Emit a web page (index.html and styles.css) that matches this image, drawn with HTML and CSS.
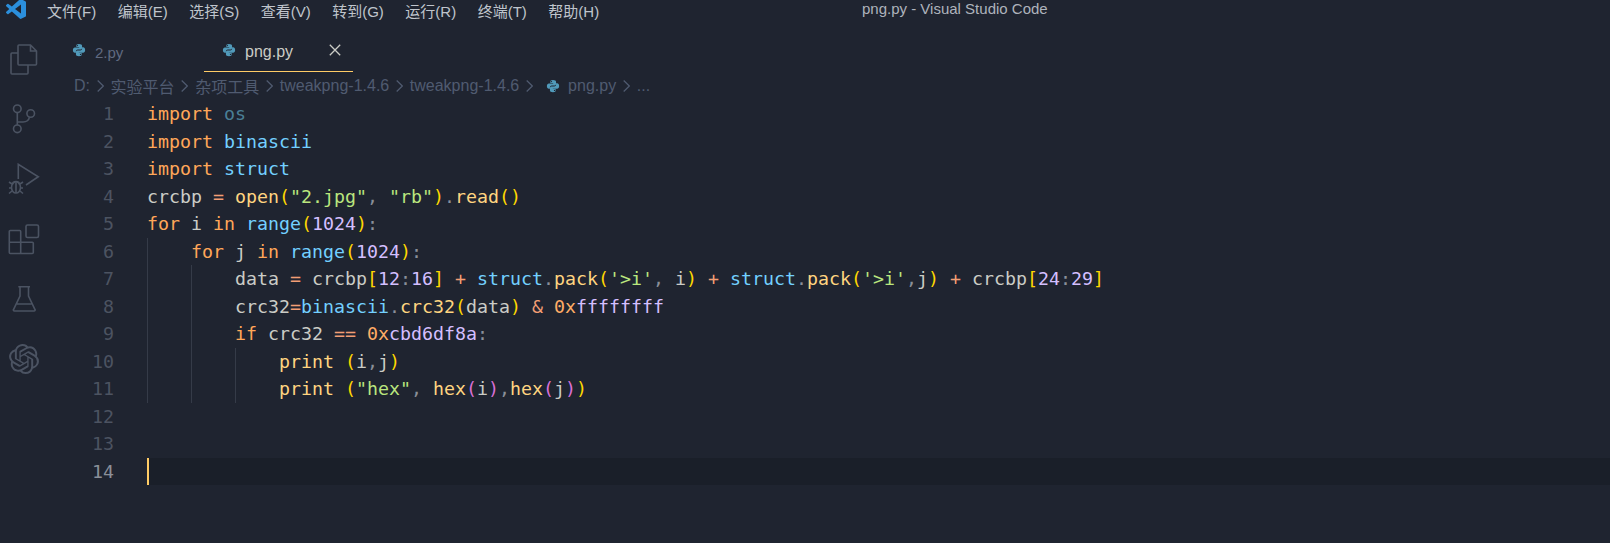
FILE: index.html
```html
<!DOCTYPE html>
<html lang="en">
<head>
    <meta charset="UTF-8">
    <meta name="viewport" content="width=device-width, initial-scale=1.0">
    <title>png.py - Visual Studio Code</title>
    <link rel="stylesheet" href="styles.css">
</head>
<body>
    <div class="titlebar">
        <svg class="logo" viewBox="0 0 24 24" width="20" height="20">
            <path d="M23.15 2.587L18.21.21a1.494 1.494 0 0 0-1.705.29l-9.46 8.63-4.12-3.128a.999.999 0 0 0-1.276.057L.327 7.261A1 1 0 0 0 .326 8.74L3.899 12 .326 15.26a1 1 0 0 0 .001 1.479L1.65 17.94a.999.999 0 0 0 1.276.057l4.12-3.128 9.46 8.63a1.492 1.492 0 0 0 1.704.29l4.942-2.377A1.5 1.5 0 0 0 24 20.06V3.939a1.5 1.5 0 0 0-.85-1.352zm-5.146 14.861L10.826 12l7.178-5.448v10.896z" fill="#2b8fdc"/>
        </svg>
        <div class="menu">
            <span>文件(F)</span>
            <span>编辑(E)</span>
            <span>选择(S)</span>
            <span>查看(V)</span>
            <span>转到(G)</span>
            <span>运行(R)</span>
            <span>终端(T)</span>
            <span>帮助(H)</span>
        </div>
        <div class="wintitle">png.py - Visual Studio Code</div>
    </div>

    <div class="main">
        <div class="activitybar">
            <svg viewBox="0 0 32 32" width="32" height="32"><path d="M11 2h11.500l6 6V21a1 1 0 0 1-1 1H11a1 1 0 0 1-1-1V3a1 1 0 0 1 1-1zM22.500 2V8h6M10 10H4a1 1 0 0 0-1 1V30a1 1 0 0 0 1 1H19a1 1 0 0 0 1-1V22"/></svg>
            <svg viewBox="0 0 32 32" width="32" height="32"><circle cx="9.300" cy="5.800" r="3.800"/><circle cx="9.300" cy="25.800" r="3.800"/><circle cx="22.700" cy="10.500" r="3.800"/><path d="M9.300 9.600V22M9.300 19H15c4 0 6-2.500 6.500-4.800"/></svg>
            <svg viewBox="0 0 32 32" width="32" height="32"><path d="M10.300 16V1.300L30.300 13.700 18 22"/><ellipse cx="8" cy="24.500" rx="4.500" ry="5.500"/><path d="M8 20v10M4.500 21.500c0-4 7-4 7 0M1 19l3 2M15 19l-3 2M1 25h2.500M15 25h-2.500M1 30.500l3-2.500M15 30.500l-3-2.500"/></svg>
            <svg viewBox="0 0 32 32" width="32" height="32"><rect x="18" y="2" width="12.500" height="12.500" rx="1.500"/><path d="M2.300 7.500H11.700a1 1 0 0 1 1 1V30.500H2.300a1 1 0 0 1-1-1V8.500a1 1 0 0 1 1-1zM1.300 19.200H24.300a1 1 0 0 1 1 1V29.500a1 1 0 0 1-1 1H12.700"/></svg>
            <svg viewBox="0 0 32 32" width="32" height="32"><path d="M10.300 3.700H22M12 3.700V13L5.500 26.500A1 1 0 0 0 6.500 28H26a1 1 0 0 0 1-1.500L20.500 13V3.700M9 21H23.500"/></svg>
            <svg class="filled" viewBox="0 0 24 24" width="30" height="30"><path d="M22.2819 9.8211a5.9847 5.9847 0 0 0-.5157-4.9108 6.0462 6.0462 0 0 0-6.5098-2.9A6.0651 6.0651 0 0 0 4.9807 4.1818a5.9847 5.9847 0 0 0-3.9977 2.9 6.0462 6.0462 0 0 0 .7427 7.0966 5.98 5.98 0 0 0 .511 4.9107 6.051 6.051 0 0 0 6.5146 2.9001A5.9847 5.9847 0 0 0 13.2599 24a6.0557 6.0557 0 0 0 5.7718-4.2058 5.9894 5.9894 0 0 0 3.9977-2.9001 6.0557 6.0557 0 0 0-.7475-7.0729zm-9.022 12.6081a4.4755 4.4755 0 0 1-2.8764-1.0408l.1419-.0804 4.7783-2.7582a.7948.7948 0 0 0 .3927-.6813v-6.7369l2.02 1.1686a.071.071 0 0 1 .038.052v5.5826a4.504 4.504 0 0 1-4.4945 4.4944zm-9.6607-4.1254a4.4708 4.4708 0 0 1-.5346-3.0137l.142.0852 4.783 2.7582a.7712.7712 0 0 0 .7806 0l5.8428-3.3685v2.3324a.0804.0804 0 0 1-.0332.0615L9.74 19.9502a4.4992 4.4992 0 0 1-6.1408-1.6464zM2.3408 7.8956a4.485 4.485 0 0 1 2.3655-1.9728V11.6a.7664.7664 0 0 0 .3879.6765l5.8144 3.3543-2.0201 1.1685a.0757.0757 0 0 1-.071 0l-4.8303-2.7865A4.504 4.504 0 0 1 2.3408 7.872zm16.5963 3.8558L13.1038 8.364 15.1192 7.2a.0757.0757 0 0 1 .071 0l4.8303 2.7913a4.4944 4.4944 0 0 1-.6765 8.1042v-5.6772a.79.79 0 0 0-.407-.667zm2.0107-3.0231l-.142-.0852-4.7735-2.7818a.7759.7759 0 0 0-.7854 0L9.409 9.2297V6.8974a.0662.0662 0 0 1 .0284-.0615l4.8303-2.7866a4.4992 4.4992 0 0 1 6.6802 4.66zM8.3065 12.863l-2.02-1.1638a.0804.0804 0 0 1-.038-.0567V6.0742a4.4992 4.4992 0 0 1 7.3757-3.4537l-.142.0805L8.704 5.459a.7948.7948 0 0 0-.3927.6813zm1.0976-2.3654l2.602-1.4998 2.6069 1.4998v2.9994l-2.5974 1.4997-2.6067-1.4997Z"/></svg>
        </div>

        <div class="content">
            <div class="tabs">
                <div class="tab">
                    <svg class="pyicon" viewBox="0 0 16 16" width="14" height="14"><path d="M8 1C5.500 1 5 2 5 3v1.500h3.200V5H3.300C2 5 1 6 1 8s1 3.200 2.200 3.200H4.500V9.500c0-1 1-2 2-2h3.200c1 0 1.800-.8 1.800-1.800V3c0-1-1.200-2-3.500-2zM6.300 2.200a.7.700 0 1 1 0 1.400.7.700 0 0 1 0-1.400z" fill="#519aba"/><path d="M8 15c2.500 0 3-1 3-2v-1.500H7.800V11h4.900C14 11 15 10 15 8s-1-3.200-2.200-3.200H11.500V6.500c0 1-1 2-2 2H6.300c-1 0-1.800.8-1.800 1.800V13c0 1 1.200 2 3.500 2zm1.700-1.200a.7.700 0 1 1 0-1.400.7.700 0 0 1 0 1.400z" fill="#519aba"/></svg>
                    <span>2.py</span>
                </div>
                <div class="tab active">
                    <svg class="pyicon" viewBox="0 0 16 16" width="14" height="14"><path d="M8 1C5.500 1 5 2 5 3v1.500h3.200V5H3.300C2 5 1 6 1 8s1 3.200 2.200 3.200H4.500V9.500c0-1 1-2 2-2h3.200c1 0 1.800-.8 1.800-1.800V3c0-1-1.200-2-3.500-2zM6.300 2.200a.7.700 0 1 1 0 1.400.7.700 0 0 1 0-1.400z" fill="#519aba"/><path d="M8 15c2.500 0 3-1 3-2v-1.500H7.800V11h4.900C14 11 15 10 15 8s-1-3.200-2.200-3.200H11.500V6.500c0 1-1 2-2 2H6.300c-1 0-1.800.8-1.800 1.800V13c0 1 1.200 2 3.500 2zm1.700-1.200a.7.700 0 1 1 0-1.400.7.700 0 0 1 0 1.400z" fill="#519aba"/></svg>
                    <span>png.py</span>
                    <svg class="close" viewBox="0 0 12 12" width="12" height="12"><path d="M.8.800l10.400 10.400M11.200.800L.8 11.200"/></svg>
                </div>
            </div>

            <div class="breadcrumbs">
                <span>D:</span>
                <svg class="chev" viewBox="0 0 7 12" width="7" height="12"><path d="M.7.500L6.300 6 .7 11.500"/></svg>
                <span>实验平台</span>
                <svg class="chev" viewBox="0 0 7 12" width="7" height="12"><path d="M.7.500L6.300 6 .7 11.500"/></svg>
                <span>杂项工具</span>
                <svg class="chev" viewBox="0 0 7 12" width="7" height="12"><path d="M.7.500L6.300 6 .7 11.500"/></svg>
                <span>tweakpng-1.4.6</span>
                <svg class="chev" viewBox="0 0 7 12" width="7" height="12"><path d="M.7.500L6.300 6 .7 11.500"/></svg>
                <span>tweakpng-1.4.6</span>
                <svg class="chev" viewBox="0 0 7 12" width="7" height="12"><path d="M.7.500L6.300 6 .7 11.500"/></svg>
                <svg class="pyicon" viewBox="0 0 16 16" width="14" height="14"><path d="M8 1C5.500 1 5 2 5 3v1.500h3.200V5H3.300C2 5 1 6 1 8s1 3.200 2.200 3.200H4.500V9.500c0-1 1-2 2-2h3.200c1 0 1.800-.8 1.800-1.800V3c0-1-1.200-2-3.500-2zM6.300 2.200a.7.700 0 1 1 0 1.400.7.700 0 0 1 0-1.400z" fill="#519aba"/><path d="M8 15c2.500 0 3-1 3-2v-1.500H7.800V11h4.900C14 11 15 10 15 8s-1-3.200-2.200-3.200H11.500V6.500c0 1-1 2-2 2H6.300c-1 0-1.800.8-1.800 1.800V13c0 1 1.200 2 3.500 2zm1.700-1.200a.7.700 0 1 1 0-1.400.7.700 0 0 1 0 1.400z" fill="#519aba"/></svg>
                <span>png.py</span>
                <svg class="chev" viewBox="0 0 7 12" width="7" height="12"><path d="M.7.500L6.300 6 .7 11.500"/></svg>
                <span>...</span>
            </div>

            <div class="editor">
                <div class="line"><b>1</b><code><span class="kw">import</span> <span class="mod dim">os</span></code></div>
                <div class="line"><b>2</b><code><span class="kw">import</span> <span class="mod">binascii</span></code></div>
                <div class="line"><b>3</b><code><span class="kw">import</span> <span class="mod">struct</span></code></div>
                <div class="line"><b>4</b><code>crcbp <span class="op">=</span> <span class="fn">open</span><span class="b1">(</span><span class="str">"2.jpg"</span><span class="pun">,</span> <span class="str">"rb"</span><span class="b1">)</span><span class="pun">.</span><span class="fn">read</span><span class="b1">()</span></code></div>
                <div class="line"><b>5</b><code><span class="kw">for</span> i <span class="kw">in</span> <span class="mod">range</span><span class="b1">(</span><span class="num">1024</span><span class="b1">)</span><span class="pun">:</span></code></div>
                <div class="line"><b>6</b><code><u></u>    <span class="kw">for</span> j <span class="kw">in</span> <span class="mod">range</span><span class="b1">(</span><span class="num">1024</span><span class="b1">)</span><span class="pun">:</span></code></div>
                <div class="line"><b>7</b><code><u></u><u class="g2"></u>        data <span class="op">=</span> crcbp<span class="b1">[</span><span class="num">12</span><span class="pun">:</span><span class="num">16</span><span class="b1">]</span> <span class="op">+</span> <span class="mod">struct</span><span class="pun">.</span><span class="fn">pack</span><span class="b1">(</span><span class="str">'&gt;i'</span><span class="pun">,</span> i<span class="b1">)</span> <span class="op">+</span> <span class="mod">struct</span><span class="pun">.</span><span class="fn">pack</span><span class="b1">(</span><span class="str">'&gt;i'</span><span class="pun">,</span>j<span class="b1">)</span> <span class="op">+</span> crcbp<span class="b1">[</span><span class="num">24</span><span class="pun">:</span><span class="num">29</span><span class="b1">]</span></code></div>
                <div class="line"><b>8</b><code><u></u><u class="g2"></u>        crc32<span class="op">=</span><span class="mod">binascii</span><span class="pun">.</span><span class="fn">crc32</span><span class="b1">(</span>data<span class="b1">)</span> <span class="op">&amp;</span> <span class="hexp">0x</span><span class="num">ffffffff</span></code></div>
                <div class="line"><b>9</b><code><u></u><u class="g2"></u>        <span class="kw">if</span> crc32 <span class="op">==</span> <span class="hexp">0x</span><span class="num">cbd6df8a</span><span class="pun">:</span></code></div>
                <div class="line"><b>10</b><code><u></u><u class="g2"></u><u class="g3"></u>            <span class="fn">print</span> <span class="b1">(</span>i<span class="pun">,</span>j<span class="b1">)</span></code></div>
                <div class="line"><b>11</b><code><u></u><u class="g2"></u><u class="g3"></u>            <span class="fn">print</span> <span class="b1">(</span><span class="str">"hex"</span><span class="pun">,</span> <span class="fn">hex</span><span class="b2">(</span>i<span class="b2">)</span><span class="pun">,</span><span class="fn">hex</span><span class="b2">(</span>j<span class="b2">)</span><span class="b1">)</span></code></div>
                <div class="line"><b>12</b><code></code></div>
                <div class="line"><b>13</b><code></code></div>
                <div class="line current"><b>14</b><code><s></s></code></div>
            </div>
        </div>
    </div>
</body>
</html>
```
FILE: styles.css
```css
body {
    margin: 0;
    height: 543px;
    overflow: hidden;
    background-color: #1f2430;
    font-family: "Liberation Sans", "Noto Sans CJK SC", sans-serif;
}
.titlebar {
    height: 20px;
    display: flex;
    align-items: center;
    position: relative;
    color: #bfc4cc;
    font-size: 15px;
}
.logo {
    margin: -2px 0 0 6px;
    flex: none;
}
.menu {
    display: flex;
    gap: 21.500px;
    margin-left: 21px;
}
.wintitle {
    position: absolute;
    left: 862px;
    top: 0;
    line-height: 18px;
    color: #aeb3bc;
}
.main {
    display: flex;
}
.activitybar {
    width: 48px;
    padding-top: 23px;
    display: flex;
    flex-direction: column;
    align-items: center;
    gap: 28px;
    flex: none;
}
.activitybar svg {
    fill: none;
    stroke: #4b5362;
    stroke-width: 1.600;
}
.activitybar svg.filled {
    fill: #4b5362;
    stroke: none;
    margin-top: 1px;
}
.content {
    flex: 1;
    min-width: 0;
}
.tabs {
    height: 52px;
    display: flex;
    margin-left: 6px;
    font-size: 15px;
}
.tab {
    width: 150px;
    display: flex;
    align-items: center;
    gap: 9px;
    padding: 13px 0 0 18px;
    box-sizing: border-box;
    color: #606a80;
    border-bottom: 1px solid transparent;
}
.tab .pyicon {
    margin-top: -4px;
}
.tab.active {
    width: 149px;
    font-size: 16px;
    color: #cbccc6;
    border-bottom-color: #ffcc66;
    position: relative;
}
.close {
    position: absolute;
    left: 125px;
    top: 24px;
    fill: none;
    stroke: #cbccc6;
    stroke-width: 1.300;
}
.breadcrumbs {
    height: 28px;
    display: flex;
    align-items: center;
    gap: 6.800px;
    margin-left: 26px;
    color: #505b70;
    font-size: 16px;
}
.chev {
    fill: none;
    stroke: #505b70;
    stroke-width: 1.200;
    flex: none;
}
.breadcrumbs .pyicon {
    margin: 0 1.500px 0 6px;
}
.editor {
    font-family: "DejaVu Sans Mono", monospace;
    font-size: 18.270px;
    color: #cbccc6;
}
.line {
    height: 27.500px;
    line-height: 27.500px;
    display: flex;
    white-space: pre;
}
.line b {
    width: 66px;
    flex: none;
    text-align: right;
    font-weight: normal;
    color: #4c5361;
}
.line code {
    font: inherit;
    margin-left: 33px;
    flex: 1;
    position: relative;
}
.line code u {
    position: absolute;
    left: 0;
    top: 0;
    height: 100%;
    border-left: 1px solid #353b48;
}
.line code u.g2 { left: 44px; }
.line code u.g3 { left: 88px; }
.line code s {
    display: block;
    width: 2px;
    height: 100%;
    background-color: #ffcc66;
}
.line.current code {
    background-color: #1a1f29;
}
.line.current b {
    color: #8a8f99;
}
.kw { color: #ffa759; }
.mod { color: #73d0ff; }
.mod.dim { color: #4a7f96; }
.fn { color: #ffd580; }
.str { color: #bae67e; }
.num { color: #d4bfff; }
.hexp { color: #ffad66; }
.op { color: #f29e74; }
.pun { color: #8a8f99; }
.b1 { color: #ffd700; }
.b2 { color: #da70d6; }
```
